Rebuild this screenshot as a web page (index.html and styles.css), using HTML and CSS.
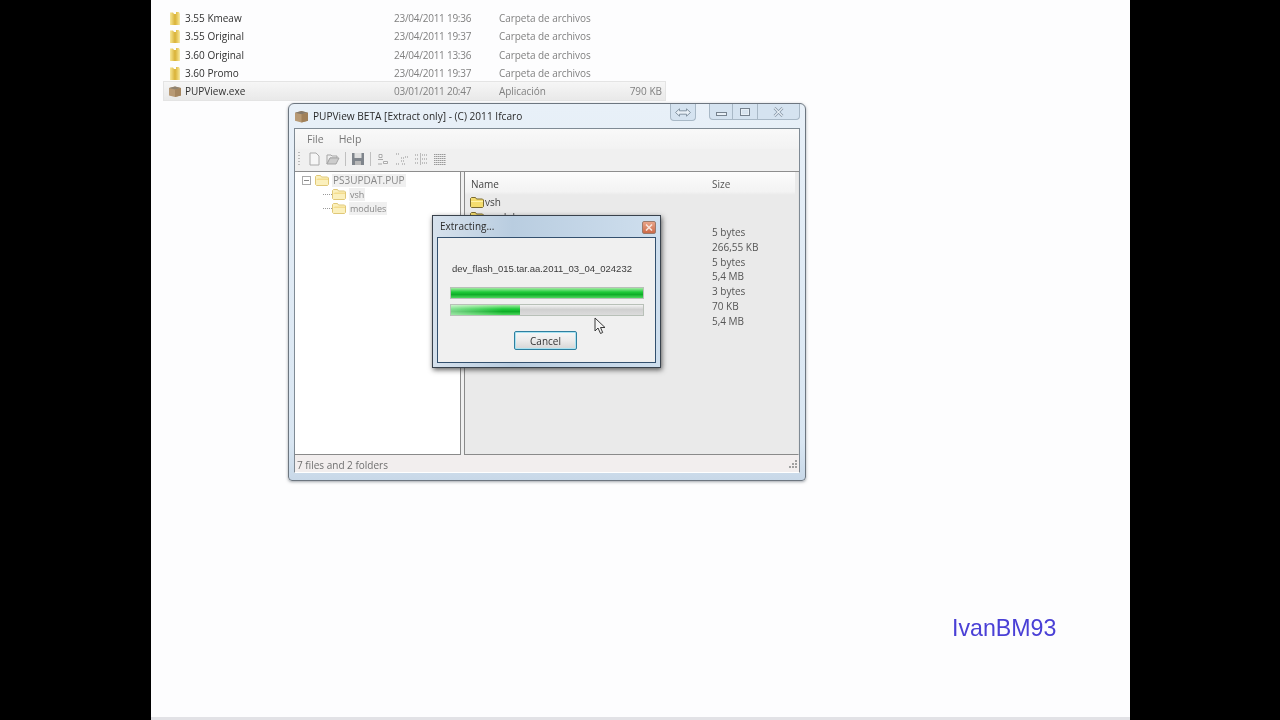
FILE: index.html
```html
<!DOCTYPE html>
<html>
<head>
    <title>PUPView</title>
    <link rel="stylesheet" href="styles.css">
</head>
<body>
    <svg class="defs" width="0" height="0">
        <defs>
            <linearGradient id="folderFill" x1="0" x2="1" y1="0" y2="0">
                <stop offset="0" stop-color="#f7e795"/>
                <stop offset="0.5" stop-color="#d9b238"/>
                <stop offset="0.7" stop-color="#e6c75a"/>
                <stop offset="1" stop-color="#f8eba6"/>
            </linearGradient>
            <symbol id="bigFolder" viewBox="0 0 12 15">
                <path d="M1 1.500h3l1 1.500h2V1h3l1 2v11H1z" fill="url(#folderFill)"/>
            </symbol>
            <symbol id="treeFolder" viewBox="0 0 14 11">
                <path d="M1.500.5h4l1 1.500h6l1 1v6.500l-1 1h-11l-1-1v-8z" fill="#fbf0bd" stroke="#e0c878"/>
                <path d="M1 5l2-1.500h10V5z" fill="#f4dc8c"/>
            </symbol>
        </defs>
    </svg>
    <div class="screen">
        <div class="files">
            <div class="file-row">
                <svg class="file-icon"><use href="#bigFolder"/></svg>
                <span class="file-name">3.55 Kmeaw</span><span class="file-date">23/04/2011 19:36</span><span class="file-type">Carpeta de archivos</span><span class="file-size"></span>
            </div>
            <div class="file-row">
                <svg class="file-icon"><use href="#bigFolder"/></svg>
                <span class="file-name">3.55 Original</span><span class="file-date">23/04/2011 19:37</span><span class="file-type">Carpeta de archivos</span><span class="file-size"></span>
            </div>
            <div class="file-row">
                <svg class="file-icon"><use href="#bigFolder"/></svg>
                <span class="file-name">3.60 Original</span><span class="file-date">24/04/2011 13:36</span><span class="file-type">Carpeta de archivos</span><span class="file-size"></span>
            </div>
            <div class="file-row">
                <svg class="file-icon"><use href="#bigFolder"/></svg>
                <span class="file-name">3.60 Promo</span><span class="file-date">23/04/2011 19:37</span><span class="file-type">Carpeta de archivos</span><span class="file-size"></span>
            </div>
            <div class="file-row selected">
                <svg class="file-icon" viewBox="0 0 12 15"><path d="M0 4l6-1.500L12 4v7.500L6 13l-6-1.500z" fill="#b89a75"/><path d="M0 4l6-1.500L12 4 6 5.500z" fill="#8f8372"/><path d="M6 5.500L12 4v7.500L6 13z" fill="#a58660"/></svg>
                <span class="file-name">PUPView.exe</span><span class="file-date">03/01/2011 20:47</span><span class="file-type">Aplicación</span><span class="file-size">790 KB</span>
            </div>
        </div>

        <div class="window">
            <div class="titlebar">
                <svg class="app-icon" viewBox="0 0 12 12"><path d="M0 2.500l6-1.500 6 1.500V10l-6 1.500L0 10z" fill="#b89a75"/><path d="M0 2.500L6 1l6 1.500L6 4z" fill="#85796a"/><path d="M6 4l6-1.500V10l-6 1.500z" fill="#a08059"/></svg>
                <span class="title-text">PUPView BETA [Extract only] - (C) 2011 Ifcaro</span>
                <div class="swap-btn">
                    <svg width="16" height="9" viewBox="0 0 16 9"><path d="M.5 4.500L4.500.8v2h7v-2l4 3.700-4 3.700v-2h-7v2z" fill="#e8f0f7" stroke="#8494a3"/></svg>
                </div>
                <div class="win-btns">
                    <div class="win-btn min"><span class="glyph-min"></span></div>
                    <div class="win-btn"><span class="glyph-max"></span></div>
                    <div class="win-btn close">
                        <svg width="11" height="10" viewBox="0 0 11 10"><path d="M1.500 1l8 8M9.500 1l-8 8" stroke="#8494a3" stroke-width="2.600"/><path d="M1.500 1l8 8M9.500 1l-8 8" stroke="#e8f0f7" stroke-width="1.200"/></svg>
                    </div>
                </div>
            </div>
            <div class="client">
                <div class="menubar">
                    <span class="menu-item">File</span>
                    <span class="menu-item">Help</span>
                </div>
                <div class="toolbar">
                    <span class="grip"></span>
                    <svg class="tool" viewBox="0 0 14 14"><path d="M3 1h6l3 3v9H3z" fill="#f6f6f6" stroke="#aaa"/></svg>
                    <svg class="tool" viewBox="0 0 14 14"><path d="M1 3h4l1 1h5v2H4l-3 6z" fill="#eee" stroke="#a5a5a5"/><path d="M1 12l3-6h9l-3 6z" fill="#ccc" stroke="#a5a5a5"/></svg>
                    <span class="tool-sep"></span>
                    <svg class="tool" viewBox="0 0 14 14"><path d="M1 1h12v12H1z" fill="#7f858c"/><path d="M3.500 1h7v5h-7z" fill="#e0e0e0"/><path d="M4 9h6v4H4z" fill="#b8b8b8"/></svg>
                    <span class="tool-sep"></span>
                    <svg class="tool" viewBox="0 0 14 14"><path d="M3 2.500h3v3H3zM7.500 9.500h4v2h-4z" fill="#f8f8f8" stroke="#9a9a9a" stroke-width=".8"/><path d="M2 7.500h5M2 12h4" stroke="#aaa"/></svg>
                    <svg class="tool" viewBox="0 0 14 14"><path d="M1 2h4M6 6h3M10 5h3M6 9h3M1 12h4M7 12h3" stroke="#8f8f8f" stroke-dasharray="1 1"/></svg>
                    <svg class="tool" viewBox="0 0 14 14"><path d="M1 3h4M8 3h5M1 7h4M8 7h5M1 11h4M8 11h5" stroke="#8f8f8f" stroke-dasharray="1 1"/><path d="M6.500 1v12" stroke="#bbb"/></svg>
                    <svg class="tool" viewBox="0 0 14 14"><path d="M1 2.500h12M1 4.500h12M1 6.500h12M1 8.500h12M1 10.500h12M1 12.500h12" stroke="#9a9a9a" stroke-dasharray="1.500 .5"/></svg>
                </div>
                <div class="panes">
                    <div class="tree">
                        <div class="tree-row">
                            <span class="expander"></span>
                            <svg class="tree-folder"><use href="#treeFolder"/></svg>
                            <span class="tree-label shaded">PS3UPDAT.PUP</span>
                        </div>
                        <div class="tree-row child">
                            <span class="branch"></span>
                            <svg class="tree-folder"><use href="#treeFolder"/></svg>
                            <span class="tree-label shaded">vsh</span>
                        </div>
                        <div class="tree-row child">
                            <span class="branch"></span>
                            <svg class="tree-folder"><use href="#treeFolder"/></svg>
                            <span class="tree-label shaded">modules</span>
                        </div>
                    </div>
                    <div class="list">
                        <div class="list-head">
                            <span class="col-name">Name</span>
                            <span class="col-size">Size</span>
                        </div>
                        <div class="list-body">
                            <div class="list-row">
                                <span class="col-name folder-cell">
                                    <svg class="list-folder" viewBox="0 0 14 11"><path d="M1.500.5h4l1 1.500h6l1 1v6.500l-1 1h-11l-1-1v-8z" fill="#f5dd6e" stroke="#7a6a30"/><path d="M1 4.500h12" stroke="#fff2a8"/></svg>vsh
                                </span>
                            </div>
                            <div class="list-row">
                                <span class="col-name folder-cell">
                                    <svg class="list-folder" viewBox="0 0 14 11"><path d="M1.500.5h4l1 1.500h6l1 1v6.500l-1 1h-11l-1-1v-8z" fill="#f5dd6e" stroke="#7a6a30"/><path d="M1 4.500h12" stroke="#fff2a8"/></svg>modules
                                </span>
                            </div>
                            <div class="list-row"><span class="col-name"></span><span class="col-size">5 bytes</span></div>
                            <div class="list-row"><span class="col-name"></span><span class="col-size">266,55 KB</span></div>
                            <div class="list-row"><span class="col-name"></span><span class="col-size">5 bytes</span></div>
                            <div class="list-row"><span class="col-name"></span><span class="col-size">5,4 MB</span></div>
                            <div class="list-row"><span class="col-name"></span><span class="col-size">3 bytes</span></div>
                            <div class="list-row"><span class="col-name"></span><span class="col-size">70 KB</span></div>
                            <div class="list-row"><span class="col-name"></span><span class="col-size">5,4 MB</span></div>
                        </div>
                    </div>
                </div>
                <div class="statusbar">
                    <span>7 files and 2 folders</span>
                    <svg class="resize" width="10" height="10" viewBox="0 0 10 10"><path d="M7 1h2v2H7zM4 4h2v2H4zM7 4h2v2H7zM1 7h2v2H1zM4 7h2v2H4zM7 7h2v2H7z" fill="#a0a0a0"/></svg>
                </div>
            </div>
        </div>

        <div class="dialog">
            <div class="dialog-title">
                <span>Extracting...</span>
                <div class="dialog-close">
                    <svg width="8" height="7" viewBox="0 0 8 7"><path d="M1 .5l6 6M7 .5l-6 6" stroke="#f7e4dc" stroke-width="1.600"/></svg>
                </div>
            </div>
            <div class="dialog-body">
                <div class="dialog-file">dev_flash_015.tar.aa.2011_03_04_024232</div>
                <div class="progress"><div class="progress-fill" style="width: 100%"></div></div>
                <div class="progress"><div class="progress-fill moving" style="width: 36%"></div></div>
                <button class="cancel">Cancel</button>
            </div>
        </div>

        <svg class="cursor" width="13" height="18" viewBox="0 0 13 18"><path d="M1 1v13l3-3 2.500 5.500 2.200-1L6.500 10.500H11z" fill="#f4f4f4" stroke="#3a3a3a"/></svg>

        <div class="watermark">IvanBM93</div>
        <div class="bottom-line"></div>
    </div>
</body>
</html>
```

FILE: styles.css
```css
html, body {
    margin: 0;
    height: 100%;
    background: #000;
    overflow: hidden;
}
body {
    font-family: "Open Sans", "Noto Sans", sans-serif;
}
.defs {
    position: absolute;
}
.screen {
    position: relative;
    width: 979px;
    height: 720px;
    margin-left: 151px;
    background: #fdfdfe;
    overflow: hidden;
    filter: blur(0.5px);
}

/* explorer list behind the app */
.files {
    padding: 9px 0 0 13px;
    width: 501px;
}
.file-row {
    display: flex;
    align-items: center;
    height: 18.3px;
    font-size: 10px;
    color: #8a8a8a;
}
.file-row.selected {
    background: linear-gradient(#f6f6f6, #e9e9e9);
    box-shadow: 0 0 0 1px #e4e4e4;
}
.file-icon {
    width: 12px;
    height: 15px;
    margin: 0 4px 0 5px;
    flex: none;
}
.file-name {
    width: 209px;
    color: #303030;
}
.file-date {
    width: 105px;
    color: #808080;
    letter-spacing: -0.25px;
}
.file-type {
    width: 118px;
    color: #808080;
    letter-spacing: -0.05px;
}
.file-size {
    width: 45px;
    text-align: right;
    color: #808080;
}

/* main window */
.window {
    position: absolute;
    left: 137px;
    top: 103px;
    width: 518px;
    height: 378px;
    box-sizing: border-box;
    padding: 0 5px 7px 5px;
    background: linear-gradient(#e8f0f8, #d9e6f2 90%, #c8d8e8);
    border: 1px solid #6d7680;
    border-radius: 6px 6px 4px 4px;
    box-shadow: 0 1px 3px rgba(70, 80, 90, 0.5);
    display: flex;
    flex-direction: column;
}
.titlebar {
    height: 24px;
    display: flex;
    align-items: center;
    flex: none;
}
.app-icon {
    width: 13px;
    height: 13px;
    margin: 0 5px 0 1px;
}
.title-text {
    flex: 1;
    font-size: 10.15px;
    color: #2a2a2a;
}
.swap-btn {
    width: 26px;
    height: 17px;
    margin: 0 13px 0 0;
    align-self: flex-start;
    display: flex;
    align-items: center;
    justify-content: center;
    box-sizing: border-box;
    border: 1px solid #a8b8c6;
    border-top: none;
    border-radius: 0 0 4px 4px;
    background: #d5e3f0;
}
.win-btns {
    display: flex;
    height: 16px;
    align-self: flex-start;
    box-sizing: border-box;
    border: 1px solid #a8b8c6;
    border-top: none;
    border-radius: 0 0 4px 4px;
    background: #d5e3f0;
}
.win-btn {
    width: 24px;
    display: flex;
    align-items: center;
    justify-content: center;
    border-right: 1px solid #a8b8c6;
}
.win-btn.min {
    width: 22px;
}
.win-btn.close {
    width: 41px;
    border-right: none;
}
.glyph-min {
    width: 9px;
    height: 2px;
    margin-top: 5px;
    background: #e8f0f7;
    border: 1px solid #76828e;
}
.glyph-max {
    width: 8px;
    height: 6px;
    background: #d8e4ef;
    border: 1px solid #76828e;
    box-shadow: inset 0 0 0 1px #e8f0f7;
}
.client {
    flex: 1;
    display: flex;
    flex-direction: column;
    background: #f0f0f0;
    border: 1px solid #7f8a94;
    border-bottom-color: #fff;
    min-height: 0;
}
.menubar {
    height: 20px;
    flex: none;
    display: flex;
    align-items: center;
    padding-left: 12px;
    gap: 15px;
    font-size: 10.5px;
    color: #777;
    background: linear-gradient(#f9f9f9, #f2f2f2);
}
.toolbar {
    height: 23px;
    flex: none;
    display: flex;
    align-items: center;
    gap: 5px;
    padding: 0 0 2px 3px;
    background: #f0f0f0;
    border-bottom: 1px solid #8d8d8d;
    box-sizing: border-box;
}
.grip {
    width: 2px;
    height: 14px;
    margin-right: 2px;
    background: repeating-linear-gradient(#bbb 0 1px, transparent 1px 3px);
}
.tool {
    width: 14px;
    height: 14px;
    flex: none;
}
.tool-sep {
    width: 1px;
    height: 14px;
    background: #c0c0c0;
}
.panes {
    flex: 1;
    display: flex;
    gap: 3px;
    min-height: 0;
}
.tree {
    width: 166px;
    box-sizing: border-box;
    background: #fff;
    border-right: 1px solid #8a8a8a;
    border-bottom: 1px solid #8a8a8a;
    padding: 1px 0 0 7px;
    font-size: 10px;
    color: #888;
}
.tree-row {
    display: flex;
    align-items: center;
    height: 14px;
}
.tree-row.child {
    padding-left: 21px;
    font-size: 9px;
}
.expander {
    width: 7px;
    height: 7px;
    flex: none;
    border: 1px solid #aaa;
    margin-right: 4px;
    background: linear-gradient(#888, #888) center / 5px 1px no-repeat;
}
.branch {
    width: 9px;
    flex: none;
    border-top: 1px dotted #999;
}
.tree-folder {
    width: 14px;
    height: 11px;
    margin-right: 3px;
    flex: none;
}
.tree-label.shaded {
    background: #f0f0f0;
    padding: 0 1px;
    line-height: 13px;
}
.list {
    flex: 1;
    background: #eaeaea;
    border-left: 1px solid #8a8a8a;
    border-bottom: 1px solid #8a8a8a;
    border-right: 1px solid #e4e4e4;
    display: flex;
    flex-direction: column;
    min-width: 0;
}
.list-head {
    height: 23px;
    display: flex;
    align-items: center;
    flex: none;
    box-sizing: border-box;
    font-size: 10px;
    color: #444;
    margin-right: 3px;
    background: linear-gradient(#fcfcfc, #f3f3f3 85%, #eaeaea);
}
.col-name {
    width: 247px;
    padding-left: 6px;
    flex: none;
    box-sizing: border-box;
}
.col-size {
    font-size: 10px;
    color: #555;
}
.list-row {
    display: flex;
    align-items: center;
    height: 14.8px;
    font-size: 10px;
    color: #555;
}
.folder-cell {
    display: flex;
    align-items: center;
    padding-left: 5px;
    color: #444;
}
.list-folder {
    width: 14px;
    height: 11px;
    margin-right: 1px;
}
.statusbar {
    height: 17px;
    flex: none;
    display: flex;
    align-items: center;
    justify-content: space-between;
    padding: 3px 1px 0 2px;
    box-sizing: border-box;
    font-size: 10px;
    color: #6f6f6f;
    background: #f2eeee;
}
.resize {
    margin-bottom: 2px;
}

/* progress dialog */
.dialog {
    position: absolute;
    left: 281px;
    top: 215px;
    width: 229px;
    height: 153px;
    box-sizing: border-box;
    padding: 0 4px 4px;
    background: linear-gradient(90deg, #d6e1ec, #b9cde0 35%, #cfdfee);
    border: 1px solid #39424c;
    box-shadow: 1px 2px 5px rgba(30, 30, 30, 0.7);
    display: flex;
    flex-direction: column;
}
.dialog-title {
    height: 21px;
    flex: none;
    display: flex;
    align-items: center;
    justify-content: space-between;
    font-size: 10px;
    color: #2c2c2c;
    padding: 0 0 1px 3px;
    box-sizing: border-box;
}
.dialog-close {
    width: 14px;
    height: 13px;
    box-sizing: border-box;
    margin-top: 2px;
    display: flex;
    align-items: center;
    justify-content: center;
    background: linear-gradient(#e9a488, #cc6a48);
    border: 1px solid #9a7a6c;
    border-radius: 2px;
}
.dialog-body {
    flex: 1;
    background: #f0f0f0;
    border: 1px solid #33506e;
    padding: 0 11px 0 12px;
    display: flex;
    flex-direction: column;
}
.dialog-file {
    font-family: "Liberation Sans", sans-serif;
    font-size: 9.5px;
    color: #3a3a3a;
    margin: 25px 0 0 2px;
    height: 24px;
    white-space: nowrap;
}
.progress {
    height: 12px;
    margin-bottom: 5px;
    background: linear-gradient(#f2f2f2, #d0d0d0 45%, #dcdcdc);
    border: 1px solid #b8c0b8;
    box-sizing: border-box;
}
.progress-fill {
    height: 100%;
    background: linear-gradient(#a4eba4, #1fcb3a 40%, #0fae28 65%, #4ed85e);
}
.progress-fill.moving {
    background: linear-gradient(90deg, rgba(255, 255, 255, 0.45), rgba(255, 255, 255, 0) 75%), linear-gradient(#a4eba4, #1fcb3a 40%, #0fae28 65%, #4ed85e);
}
.cancel {
    align-self: flex-start;
    width: 63px;
    height: 19px;
    margin: 10px 0 0 64px;
    padding: 0;
    font-family: "Open Sans", sans-serif;
    font-size: 10px;
    color: #333;
    background: linear-gradient(#f6f6f6, #ebebeb 50%, #d6d6d6);
    border: 1px solid #2f7f9f;
    border-radius: 2px;
    box-shadow: inset 0 0 0 1px #a9e3f2;
}
.cursor {
    position: absolute;
    left: 443px;
    top: 317px;
}

.watermark {
    position: absolute;
    left: 801px;
    top: 614px;
    font-family: "Liberation Sans", sans-serif;
    font-size: 23.2px;
    line-height: 28px;
    color: #4a40d6;
}
.bottom-line {
    position: absolute;
    left: 0;
    right: 0;
    bottom: 0;
    height: 3px;
    background: #e2e2e6;
}
```
